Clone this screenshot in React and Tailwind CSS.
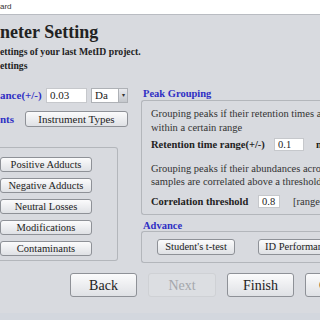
export default function App() {
  const btn =
    "flex items-center justify-center border border-[#8e9197] rounded-[3px] bg-gradient-to-b from-[#fbfbfc] to-[#dfe1e5] text-[#222] whitespace-nowrap overflow-hidden";

  return (
    <div className="w-[320px] h-[320px] overflow-hidden bg-[#d8dadf] flex flex-col text-[#222] font-['Liberation_Serif','Times_New_Roman',serif]">
      {/* Window title bar */}
      <div className="h-[15px] shrink-0 bg-white border-b border-[#b9bcc2] flex items-center text-[8px] text-[#333] font-['Liberation_Sans',Arial,sans-serif]">
        ard
      </div>

      {/* Header */}
      <div className="pt-[6px]">
        <h1 className="text-[18px] font-bold leading-[22px] whitespace-nowrap">
          neter Setting
        </h1>
        <p className="mt-[2px] text-[9.7px] font-bold leading-[13px] whitespace-nowrap">
          ettings of your last MetID project.
        </p>
        <p className="mt-[1px] text-[9.7px] font-bold leading-[13px] whitespace-nowrap">
          ettings
        </p>
      </div>

      <div className="flex mt-[12px]">
        {/* Left column */}
        <div className="w-[141px] shrink-0 flex flex-col">
          <div className="flex items-center h-[15px] mt-[4px]">
            <span className="w-[46px] text-[11px] font-bold text-[#2f2fc4] whitespace-nowrap">
              ance(+/-)
            </span>
            <div className="w-[41px] h-[15px] bg-white border border-[#c6c8cc] text-[11px] pl-[3px] leading-[13px]">
              0.03
            </div>
            <div className="ml-[4px] w-[37px] h-[15px] bg-white border border-[#aeb1b6] flex items-center">
              <span className="flex-1 text-[11px] pl-[3px] leading-[13px]">Da</span>
              <span className="w-[9px] h-full bg-gradient-to-b from-[#e9eaee] to-[#c4c7cc] border-l border-[#aeb1b6] flex items-center justify-center text-[6px] text-[#333]">
                ▾
              </span>
            </div>
          </div>

          <div className="flex items-center mt-[8px] h-[16px]">
            <span className="w-[25px] text-[11px] font-bold text-[#2f2fc4]">
              nts
            </span>
            <div className={`${btn} w-[103px] h-[16px] text-[11px]`}>
              Instrument Types
            </div>
          </div>

          <div className="mt-[20px] w-[118px] h-[114px] border border-l-0 border-[#b3b6bb] rounded-r-[3px] flex flex-col gap-[6px] pt-[9px]">
            {[
              "Positive Adducts",
              "Negative Adducts",
              "Neutral Losses",
              "Modifications",
              "Contaminants",
            ].map((t) => (
              <div key={t} className={`${btn} w-[92px] h-[15px] text-[10.5px]`}>
                {t}
              </div>
            ))}
          </div>
        </div>

        {/* Right column */}
        <div className="flex-1 flex flex-col pt-[4px]">
          <div className="pl-[2px] h-[12px] text-[10.5px] font-bold text-[#2f2fc4] leading-[12px]">
            Peak Grouping
          </div>
          <div className="h-[115px] border border-r-0 border-[#b3b6bb] rounded-l-[3px] pl-[9px] pt-[6px] text-[10.5px] whitespace-nowrap overflow-hidden">
            <p className="leading-[14px] text-[#333]">
              Grouping peaks if their retention times are
            </p>
            <p className="leading-[14px] text-[#333]">within a certain range</p>
            <div className="flex items-center mt-[3px] h-[13px]">
              <span className="font-bold w-[123px]">
                Retention time range(+/-)
              </span>
              <div className="w-[30px] h-[13px] bg-white border border-[#c6c8cc] text-[10.5px] pl-[3px] leading-[11px]">
                0.1
              </div>
              <span className="ml-[12px] font-bold">m</span>
            </div>
            <p className="mt-[11px] leading-[13px] text-[#333]">
              Grouping peaks if their abundances across
            </p>
            <p className="leading-[13px] text-[#333]">
              samples are correlated above a threshold
            </p>
            <div className="flex items-center mt-[7px] h-[13px]">
              <span className="font-bold w-[107px]">Correlation threshold</span>
              <div className="w-[22px] h-[13px] bg-white border border-[#c6c8cc] text-[10.5px] pl-[3px] leading-[11px]">
                0.8
              </div>
              <span className="ml-[13px] text-[#333]">[range:</span>
            </div>
          </div>

          <div className="mt-[5px] pl-[2px] h-[12px] text-[10.5px] font-bold text-[#2f2fc4] leading-[12px]">
            Advance
          </div>
          <div className="mt-[-1px] h-[32px] border border-r-0 border-[#b3b6bb] rounded-l-[3px] flex items-center pl-[15px] gap-[23px] overflow-hidden">
            <div className={`${btn} w-[78px] h-[16px] shrink-0 text-[10.5px]`}>
              Student's t-test
            </div>
            <div className={`${btn} w-[80px] h-[16px] shrink-0 text-[10.5px] justify-start pl-[6px]`}>
              ID Performance
            </div>
          </div>
        </div>
      </div>

      {/* Bottom navigation */}
      <div className="flex gap-[11px] pl-[70px] mt-[10px]">
        <div className={`${btn} w-[67px] h-[24px] shrink-0 text-[14px]`}>Back</div>
        <div className="flex items-center justify-center w-[68px] h-[24px] shrink-0 border border-[#cfd1d5] rounded-[3px] bg-[#dcdee2] text-[14px] text-[#a4a7ac]">
          Next
        </div>
        <div className={`${btn} w-[67px] h-[24px] shrink-0 text-[14px]`}>Finish</div>
        <div className={`${btn} w-[67px] h-[24px] shrink-0 text-[14px]`}>Cancel</div>
      </div>
      <div className="flex-1 mt-[16px] bg-[#d3d7de]" />
    </div>
  );
}
